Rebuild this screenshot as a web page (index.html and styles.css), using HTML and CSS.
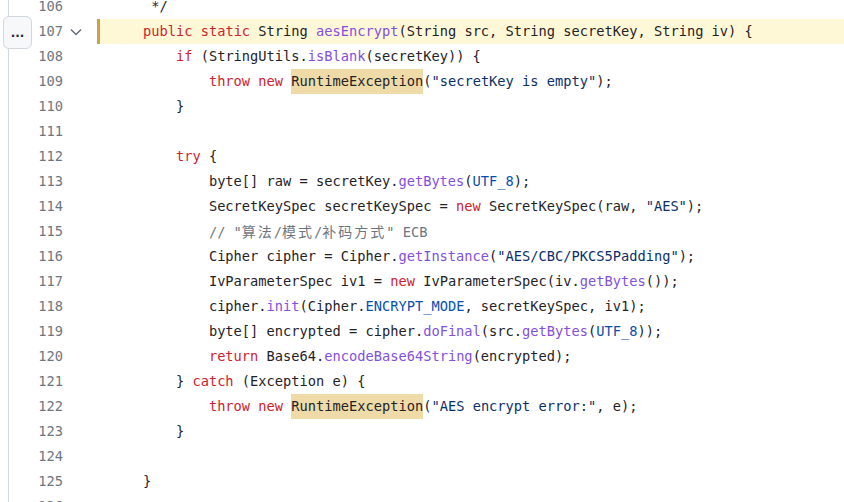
FILE: index.html
```html
<!DOCTYPE html>
<html>
<head>
<meta charset="utf-8">
<link rel="stylesheet" href="styles.css">
</head>
<body>
<div class="viewer">
  <div class="lines">
    <div class="row"><span class="num">106</span><span class="fold"></span><span class="code">     */</span></div>
    <div class="row hl"><span class="num">107</span><span class="fold"><svg width="12" height="8" viewBox="0 0 12 8"><polyline points="1,1.5 6,6.5 11,1.5" fill="none" stroke="#656d76" stroke-width="1.5"/></svg></span><span class="code">    <span class="k">public</span> <span class="k">static</span> String <span class="f">aesEncrypt</span>(String src, String secretKey, String iv) {</span></div>
    <div class="row"><span class="num">108</span><span class="fold"></span><span class="code">        <span class="k">if</span> (StringUtils.<span class="f">isBlank</span>(secretKey)) {</span></div>
    <div class="row"><span class="num">109</span><span class="fold"></span><span class="code">            <span class="k">throw</span> <span class="k">new</span> <span class="mark">RuntimeException</span>(<span class="s">"secretKey is empty"</span>);</span></div>
    <div class="row"><span class="num">110</span><span class="fold"></span><span class="code">        }</span></div>
    <div class="row"><span class="num">111</span><span class="fold"></span><span class="code"></span></div>
    <div class="row"><span class="num">112</span><span class="fold"></span><span class="code">        <span class="k">try</span> {</span></div>
    <div class="row"><span class="num">113</span><span class="fold"></span><span class="code">            byte[] raw = secretKey.<span class="f">getBytes</span>(<span class="c">UTF_8</span>);</span></div>
    <div class="row"><span class="num">114</span><span class="fold"></span><span class="code">            SecretKeySpec secretKeySpec = <span class="k">new</span> SecretKeySpec(raw, <span class="s">"AES"</span>);</span></div>
    <div class="row"><span class="num">115</span><span class="fold"></span><span class="code">            <span class="cm">// "<span class="cjk">算法</span>/<span class="cjk">模式</span>/<span class="cjk">补码方式</span>" ECB</span></span></div>
    <div class="row"><span class="num">116</span><span class="fold"></span><span class="code">            Cipher cipher = Cipher.<span class="f">getInstance</span>(<span class="s">"AES/CBC/PKCS5Padding"</span>);</span></div>
    <div class="row"><span class="num">117</span><span class="fold"></span><span class="code">            IvParameterSpec iv1 = <span class="k">new</span> IvParameterSpec(iv.<span class="f">getBytes</span>());</span></div>
    <div class="row"><span class="num">118</span><span class="fold"></span><span class="code">            cipher.<span class="f">init</span>(Cipher.<span class="c">ENCRYPT_MODE</span>, secretKeySpec, iv1);</span></div>
    <div class="row"><span class="num">119</span><span class="fold"></span><span class="code">            byte[] encrypted = cipher.<span class="f">doFinal</span>(src.<span class="f">getBytes</span>(<span class="c">UTF_8</span>));</span></div>
    <div class="row"><span class="num">120</span><span class="fold"></span><span class="code">            <span class="k">return</span> Base64.<span class="f">encodeBase64String</span>(encrypted);</span></div>
    <div class="row"><span class="num">121</span><span class="fold"></span><span class="code">        } <span class="k">catch</span> (Exception e) {</span></div>
    <div class="row"><span class="num">122</span><span class="fold"></span><span class="code">            <span class="k">throw</span> <span class="k">new</span> <span class="mark">RuntimeException</span>(<span class="s">"AES encrypt error:"</span>, e);</span></div>
    <div class="row"><span class="num">123</span><span class="fold"></span><span class="code">        }</span></div>
    <div class="row"><span class="num">124</span><span class="fold"></span><span class="code"></span></div>
    <div class="row"><span class="num">125</span><span class="fold"></span><span class="code">    }</span></div>
    <div class="row"><span class="num">126</span><span class="fold"></span><span class="code"></span></div>
  </div>
  <button class="more">...</button>
</div>
</body>
</html>
```
FILE: styles.css
```css
html, body {
  margin: 0;
  padding: 0;
  background: #ffffff;
  overflow: hidden;
}
.viewer {
  position: relative;
  height: 502px;
  padding-left: 8px;
  overflow: hidden;
}
.lines {
  border-left: 1px solid #d0d7de;
  margin-top: -6px;
  font-family: "DejaVu Sans Mono", "Noto Sans CJK SC", monospace;
  font-size: 13.7px;
  color: #1f2328;
}
.row {
  display: flex;
  height: 25px;
  line-height: 25px;
}
.num {
  width: 54px;
  flex: none;
  text-align: right;
  color: #6e7781;
}
.fold {
  width: 34px;
  flex: none;
  display: flex;
  align-items: center;
  padding-left: 7px;
  box-sizing: border-box;
}
.fold svg {
  display: block;
  margin-top: 1px;
}
.code {
  flex: 1;
  white-space: pre;
  border-left: 3px solid transparent;
  padding-left: 10px;
}
.row.hl .code {
  background: #fff8d6;
  border-left-color: #c9a152;
}
.k { color: #cf222e; }
.f { color: #8250df; }
.s { color: #0a3069; }
.c { color: #0550ae; }
.cm { color: #6e7781; }
.cjk {
  font-family: "Noto Sans CJK SC", sans-serif;
  font-size: 14px;
  letter-spacing: 2px;
}
.mark {
  background: #efdba7;
  display: inline-block;
  height: 25px;
}
.more {
  position: absolute;
  left: 3px;
  top: 16px;
  width: 29px;
  height: 33px;
  box-sizing: border-box;
  border: 1px solid #d0d7de;
  border-radius: 6px;
  background: #f6f8fa;
  color: #24292f;
  font-family: "DejaVu Sans", sans-serif;
  font-size: 12px;
  font-weight: bold;
  padding: 0;
  line-height: 28px;
  text-align: center;
}
```
